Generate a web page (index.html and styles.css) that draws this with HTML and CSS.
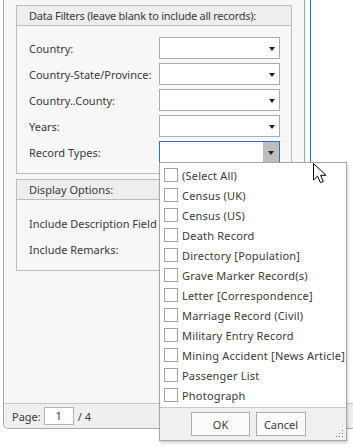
FILE: index.html
```html
<!DOCTYPE html>
<html>
<head>
<meta charset="utf-8">
<link rel="stylesheet" href="styles.css">
</head>
<body>
<div class="app">
  <div class="body">
    <div class="panel">
      <section class="group g1">
        <div class="ghead">Data Filters (leave blank to include all records):</div>
        <div class="gbody">
          <div class="row"><span class="lbl">Country:</span><div class="combo"><span class="arrow"></span></div></div>
          <div class="row"><span class="lbl">Country-State/Province:</span><div class="combo"><span class="arrow"></span></div></div>
          <div class="row"><span class="lbl">Country..County:</span><div class="combo"><span class="arrow"></span></div></div>
          <div class="row"><span class="lbl">Years:</span><div class="combo"><span class="arrow"></span></div></div>
          <div class="row"><span class="lbl">Record Types:</span><div class="combo open"><span class="btn"><span class="arrow"></span></span></div></div>
        </div>
      </section>
      <section class="group g2">
        <div class="ghead">Display Options:</div>
        <div class="gbody">
          <div class="row"><span class="lbl">Include Description Field</span></div>
          <div class="row"><span class="lbl">Include Remarks:</span></div>
        </div>
      </section>
    </div>
    <div class="side"><div class="focusline"></div></div>
  </div>
  <div class="pagebar">
    <span class="ptxt">Page:</span><span class="pagein">1</span><span class="ptxt">/ 4</span>
  </div>
</div>

<div class="popup">
  <ul class="list">
    <li><span class="cb"></span>(Select All)</li>
    <li><span class="cb"></span>Census (UK)</li>
    <li><span class="cb"></span>Census (US)</li>
    <li><span class="cb"></span>Death Record</li>
    <li><span class="cb"></span>Directory [Population]</li>
    <li><span class="cb"></span>Grave Marker Record(s)</li>
    <li><span class="cb"></span>Letter [Correspondence]</li>
    <li><span class="cb"></span>Marriage Record (Civil)</li>
    <li><span class="cb"></span>Military Entry Record</li>
    <li><span class="cb"></span>Mining Accident [News Article]</li>
    <li><span class="cb"></span>Passenger List</li>
    <li><span class="cb"></span>Photograph</li>
  </ul>
  <div class="pfoot">
    <button class="pbtn ok">OK</button>
    <button class="pbtn cancel">Cancel</button>
    <svg class="grip" width="8" height="8" viewBox="0 0 8 8">
      <rect x="6" y="0" width="1" height="1" fill="#777"/>
      <rect x="3" y="3" width="1" height="1" fill="#777"/>
      <rect x="6" y="3" width="1" height="1" fill="#777"/>
      <rect x="0" y="6" width="1" height="1" fill="#777"/>
      <rect x="3" y="6" width="1" height="1" fill="#777"/>
      <rect x="6" y="6" width="1" height="1" fill="#777"/>
    </svg>
  </div>
</div>

<svg class="cursor" width="15" height="21" viewBox="0 0 15 21">
  <path d="M0.5 0.5 L0.5 17 L4.6 13.2 L7.4 19.6 L10.2 18.4 L7.6 12.3 L13 12.3 Z" fill="#fff" stroke="#000" stroke-width="1" stroke-linejoin="miter"/>
</svg>
</body>
</html>
```

FILE: styles.css
```css
* { box-sizing: border-box; }
html, body {
  margin: 0;
  padding: 0;
  width: 353px;
  height: 447px;
  overflow: hidden;
  background: #ffffff;
  font-family: "Noto Sans", "Open Sans", sans-serif;
  font-size: 11px;
  color: #3a3a3a;
}
body { position: relative; }

.app {
  margin-left: 3px;
  width: 352px;
  height: 429px;
  display: flex;
  flex-direction: column;
  border-left: 1px solid #a9a9a9;
  border-bottom: 1px solid #a9a9a9;
  border-bottom-left-radius: 5px;
  overflow: hidden;
}
.body {
  height: 403px;
  display: flex;
}
.panel {
  width: 301px;
  background: #f7f7f7;
  border-right: 1px solid #a9a9a9;
  padding: 5px 0 0 12px;
}
.side {
  flex: 1;
  background: #fff;
  padding-left: 5px;
}
.focusline {
  width: 1px;
  height: 164px;
  background: #1a78d0;
}

.group {
  width: 276px;
  border: 1px solid #bcbcbc;
}
.g2 { margin-top: 5px; }
.ghead {
  height: 20px;
  line-height: 19px;
  background: #eeeeee;
  border-bottom: 1px solid #bcbcbc;
  padding-left: 12px;
  white-space: nowrap;
}
.g1 .ghead { letter-spacing: -0.25px; }
.gbody {
  display: flex;
  flex-direction: column;
  gap: 4px;
  padding: 11px 0 10px 12px;
}
.g2 .gbody { padding: 12px 0 10px 12px; }
.row {
  height: 22px;
  display: flex;
  align-items: center;
}
.lbl {
  width: 130px;
  flex: none;
  white-space: nowrap;
}
.combo {
  width: 121px;
  height: 22px;
  border: 1px solid #ababab;
  background: #fff;
  display: flex;
  justify-content: flex-end;
  align-items: center;
  padding-right: 4px;
}
.arrow {
  width: 0;
  height: 0;
  border-left: 3.5px solid transparent;
  border-right: 3.5px solid transparent;
  border-top: 4px solid #222;
  margin-top: 2px;
}
.combo.open {
  border-color: #1f78cc;
  padding-right: 0;
  align-items: stretch;
}
.btn {
  width: 16px;
  background: #bdbdbd;
  display: flex;
  align-items: center;
  justify-content: center;
}

.pagebar {
  height: 25px;
  border-top: 1px solid #c6c6c6;
  background: #efefef;
  display: flex;
  align-items: center;
  padding-left: 8px;
  gap: 3px;
}
.pagein {
  width: 30px;
  height: 18px;
  border: 1px solid #b4b4b4;
  background: #fff;
  text-align: center;
  line-height: 16px;
  margin-right: 1px;
}

.popup {
  position: absolute;
  left: 159px;
  top: 162px;
  width: 188px;
  height: 279px;
  background: #fff;
  border: 1px solid #a6a6a6;
  box-shadow: 1px 2px 3px rgba(0, 0, 0, 0.18);
  display: flex;
  flex-direction: column;
}
.list {
  list-style: none;
  margin: 0;
  padding: 2px 0 2px 4px;
}
.list li {
  height: 20px;
  display: flex;
  align-items: center;
  gap: 4px;
  white-space: nowrap;
  color: #3a3a3a;
  letter-spacing: 0.2px;
}
.cb {
  width: 14px;
  height: 14px;
  border: 1px solid #a3a3a3;
  background: #fff;
  flex: none;
}
.pfoot {
  flex: 1;
  border-top: 1px solid #c8c8c8;
  background: #f0f0f0;
  display: flex;
  align-items: flex-start;
  padding: 4px 0 0 31px;
  gap: 6px;
  position: relative;
}
.pbtn {
  height: 24px;
  border: 1px solid #adadad;
  background: #fbfbfb;
  font-family: inherit;
  font-size: 11px;
  color: #3a3a3a;
  padding: 0;
}
.ok { width: 59px; }
.cancel { width: 50px; }
.grip {
  position: absolute;
  right: 2px;
  bottom: 2px;
}
.cursor {
  position: absolute;
  left: 313px;
  top: 163px;
}
```
